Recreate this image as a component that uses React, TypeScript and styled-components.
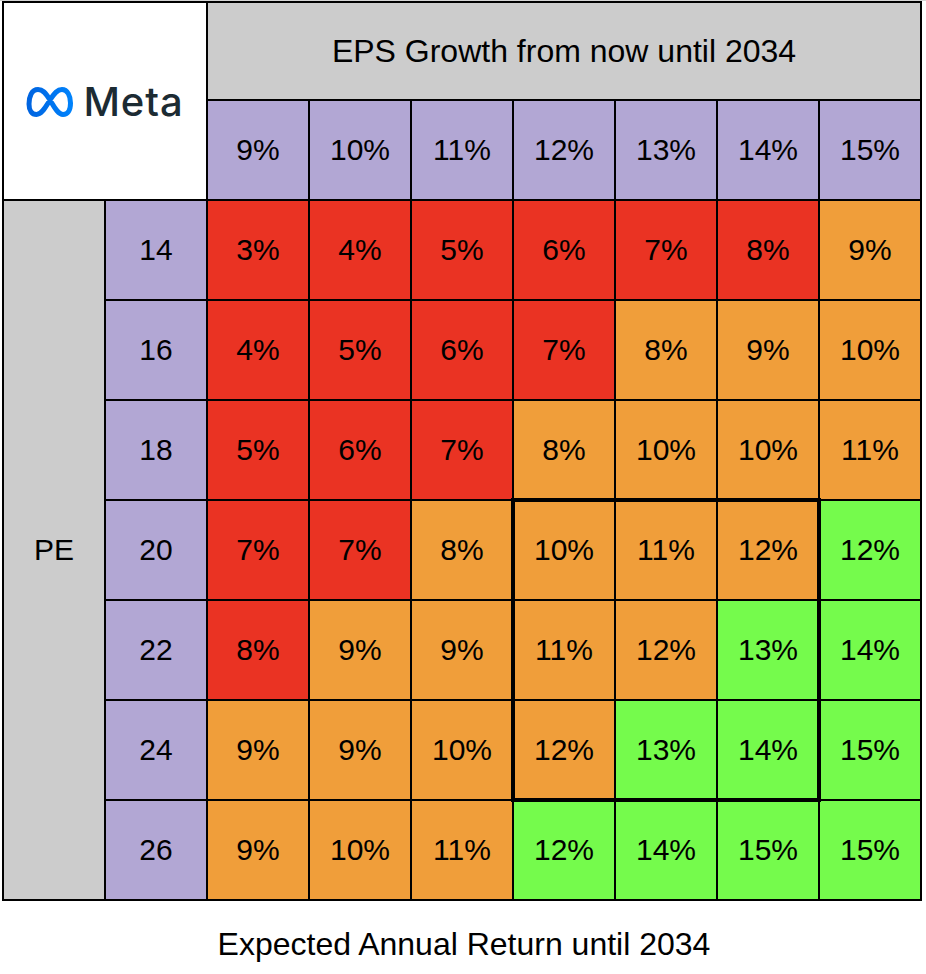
import React from 'react';
import styled, { createGlobalStyle } from 'styled-components';

const GlobalStyle = createGlobalStyle`
  html, body {
    margin: 0;
    padding: 0;
    background: #ffffff;
  }
  body {
    border-top: 1px solid #d4d4d4;
    font-family: "Liberation Sans", Arial, sans-serif;
    color: #000;
  }
`;

type Tone = 'red' | 'orange' | 'green' | 'purple' | 'gray' | 'white';

const tones: Record<Tone, string> = {
  red: '#ea3323',
  orange: '#f09e3a',
  green: '#75fb4c',
  purple: '#b2a7d4',
  gray: '#cccccc',
  white: '#ffffff',
};

const Page = styled.div`
  padding-left: 2px;
  width: 920px;
`;

const Grid = styled.div`
  position: relative;
  display: grid;
  grid-template-columns: repeat(9, 100px);
  grid-template-rows: 96px repeat(8, 98px);
  gap: 2px;
  padding: 2px;
  background: #000;
  width: fit-content;
`;

const Cell = styled.div<{
  $tone: Tone;
  $row: number;
  $col: number;
  $rowSpan?: number;
  $colSpan?: number;
  $size?: number;
}>`
  grid-row: ${(p) => p.$row} / span ${(p) => p.$rowSpan ?? 1};
  grid-column: ${(p) => p.$col} / span ${(p) => p.$colSpan ?? 1};
  background: ${(p) => tones[p.$tone]};
  display: flex;
  align-items: center;
  justify-content: center;
  font-size: ${(p) => p.$size ?? 30}px;
  line-height: 1;
`;

const Highlight = styled.div`
  grid-row: 6 / span 3;
  grid-column: 6 / span 3;
  margin: -3px;
  border: 4px solid #000;
  z-index: 1;
  pointer-events: none;
`;

const Logo = styled.div`
  display: flex;
  align-items: center;
  gap: 9px;
  margin-top: 2px;
`;

const LogoText = styled.span`
  font-family: Inter, "Noto Sans", sans-serif;
  font-size: 40px;
  font-weight: 500;
  color: #1c2b33;
  letter-spacing: 0.9px;
`;

const Caption = styled.div`
  width: 924px;
  margin-top: 25px;
  text-align: center;
  font-size: 32px;
  line-height: 37px;
`;

const MetaMark: React.FC = () => (
  <svg width="48" height="32" viewBox="0 0 48 32">
    <defs>
      <linearGradient id="metaGrad" x1="0" y1="0" x2="1" y2="0">
        <stop offset="0" stopColor="#0064e0" />
        <stop offset="0.5" stopColor="#0073ee" />
        <stop offset="1" stopColor="#0082fb" />
      </linearGradient>
    </defs>
    <path
      d="M12 3.5 C5.5 3.5 3 11 3 18 C3 24.5 6 28.5 10.5 28.5 C15.5 28.5 19 22 24 14 C28.5 7 31.5 3.5 36 3.5 C41.5 3.5 44.5 10 44.5 17 C44.5 24.5 41.5 28.5 37 28.5 C32 28.5 28.5 21.5 24 14 C19.5 6.5 16.5 3.5 12 3.5 Z"
      fill="none"
      stroke="url(#metaGrad)"
      strokeWidth="5"
      strokeLinejoin="round"
    />
  </svg>
);

const growth = ['9%', '10%', '11%', '12%', '13%', '14%', '15%'];

const R: Tone = 'red';
const O: Tone = 'orange';
const G: Tone = 'green';

const rows: { pe: string; values: string[]; tones: Tone[] }[] = [
  { pe: '14', values: ['3%', '4%', '5%', '6%', '7%', '8%', '9%'], tones: [R, R, R, R, R, R, O] },
  { pe: '16', values: ['4%', '5%', '6%', '7%', '8%', '9%', '10%'], tones: [R, R, R, R, O, O, O] },
  { pe: '18', values: ['5%', '6%', '7%', '8%', '10%', '10%', '11%'], tones: [R, R, R, O, O, O, O] },
  { pe: '20', values: ['7%', '7%', '8%', '10%', '11%', '12%', '12%'], tones: [R, R, O, O, O, O, G] },
  { pe: '22', values: ['8%', '9%', '9%', '11%', '12%', '13%', '14%'], tones: [R, O, O, O, O, G, G] },
  { pe: '24', values: ['9%', '9%', '10%', '12%', '13%', '14%', '15%'], tones: [O, O, O, O, G, G, G] },
  { pe: '26', values: ['9%', '10%', '11%', '12%', '14%', '15%', '15%'], tones: [O, O, O, G, G, G, G] },
];

const App: React.FC = () => {
  return (
    <Page>
      <GlobalStyle />
      <Grid>
        <Cell $tone="white" $row={1} $col={1} $rowSpan={2} $colSpan={2}>
          <Logo>
            <MetaMark />
            <LogoText>Meta</LogoText>
          </Logo>
        </Cell>
        <Cell $tone="gray" $row={1} $col={3} $colSpan={7} $size={32}>
          EPS Growth from now until 2034
        </Cell>
        {growth.map((g, i) => (
          <Cell key={g} $tone="purple" $row={2} $col={i + 3}>
            {g}
          </Cell>
        ))}
        <Cell $tone="gray" $row={3} $col={1} $rowSpan={7}>
          PE
        </Cell>
        {rows.map((r, ri) => (
          <React.Fragment key={r.pe}>
            <Cell $tone="purple" $row={ri + 3} $col={2}>
              {r.pe}
            </Cell>
            {r.values.map((v, ci) => (
              <Cell key={ci} $tone={r.tones[ci]} $row={ri + 3} $col={ci + 3}>
                {v}
              </Cell>
            ))}
          </React.Fragment>
        ))}
        <Highlight />
      </Grid>
      <Caption>Expected Annual Return until 2034</Caption>
    </Page>
  );
};

export default App;
